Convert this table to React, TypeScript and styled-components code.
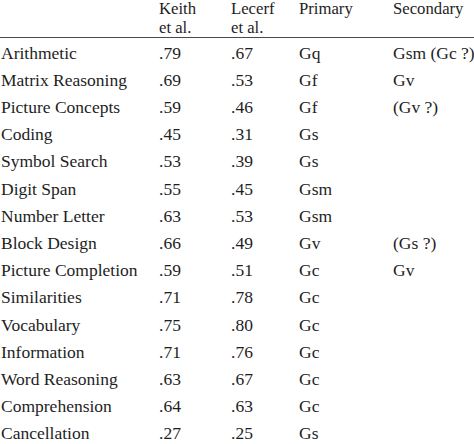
import styled, { createGlobalStyle } from "styled-components"

// Data
interface Row {
  test: string
  keith: string
  lecerf: string
  primary: string
  secondary?: string
}

const rows: Row[] = [
  { test: "Arithmetic", keith: ".79", lecerf: ".67", primary: "Gq", secondary: "Gsm (Gc ?)" },
  { test: "Matrix Reasoning", keith: ".69", lecerf: ".53", primary: "Gf", secondary: "Gv" },
  { test: "Picture Concepts", keith: ".59", lecerf: ".46", primary: "Gf", secondary: "(Gv ?)" },
  { test: "Coding", keith: ".45", lecerf: ".31", primary: "Gs" },
  { test: "Symbol Search", keith: ".53", lecerf: ".39", primary: "Gs" },
  { test: "Digit Span", keith: ".55", lecerf: ".45", primary: "Gsm" },
  { test: "Number Letter", keith: ".63", lecerf: ".53", primary: "Gsm" },
  { test: "Block Design", keith: ".66", lecerf: ".49", primary: "Gv", secondary: "(Gs ?)" },
  { test: "Picture Completion", keith: ".59", lecerf: ".51", primary: "Gc", secondary: "Gv" },
  { test: "Similarities", keith: ".71", lecerf: ".78", primary: "Gc" },
  { test: "Vocabulary", keith: ".75", lecerf: ".80", primary: "Gc" },
  { test: "Information", keith: ".71", lecerf: ".76", primary: "Gc" },
  { test: "Word Reasoning", keith: ".63", lecerf: ".67", primary: "Gc" },
  { test: "Comprehension", keith: ".64", lecerf: ".63", primary: "Gc" },
  { test: "Cancellation", keith: ".27", lecerf: ".25", primary: "Gs" },
]

// Style components
const GlobalStyle = createGlobalStyle`
  body {
    margin: 0;
    background: #ffffff;
  }
`

const Table = styled.div`
  width: 474px;
  height: 444px;
  overflow: hidden;
  font-family: "Liberation Serif", "Times New Roman", serif;
  font-size: 17.5px;
  color: #1e1e1e;
  box-sizing: border-box;
`

const Grid = styled.div`
  display: grid;
  grid-template-columns: 158px 72px 68px 94px 1fr;
  padding-left: 1px;
`

const HeaderRow = styled(Grid)`
  height: 37px;
  font-size: 16.7px;
  line-height: 18.5px;
  border-bottom: 1.3px solid #4a4a4a;
  margin-bottom: 1.7px;
`

const BodyRow = styled(Grid)`
  height: 27.2px;
  line-height: 27.2px;
  white-space: nowrap;
`

const Cell = styled.div``

const App = () => {
  return (
    <>
      <GlobalStyle />
      <Table>
        <HeaderRow>
          <Cell />
          <Cell>
            Keith
            <br />
            et al.
          </Cell>
          <Cell>
            Lecerf
            <br />
            et al.
          </Cell>
          <Cell>Primary</Cell>
          <Cell>Secondary</Cell>
        </HeaderRow>
        {rows.map((row) => (
          <BodyRow key={row.test}>
            <Cell>{row.test}</Cell>
            <Cell>{row.keith}</Cell>
            <Cell>{row.lecerf}</Cell>
            <Cell>{row.primary}</Cell>
            <Cell>{row.secondary}</Cell>
          </BodyRow>
        ))}
      </Table>
    </>
  )
}

export default App
